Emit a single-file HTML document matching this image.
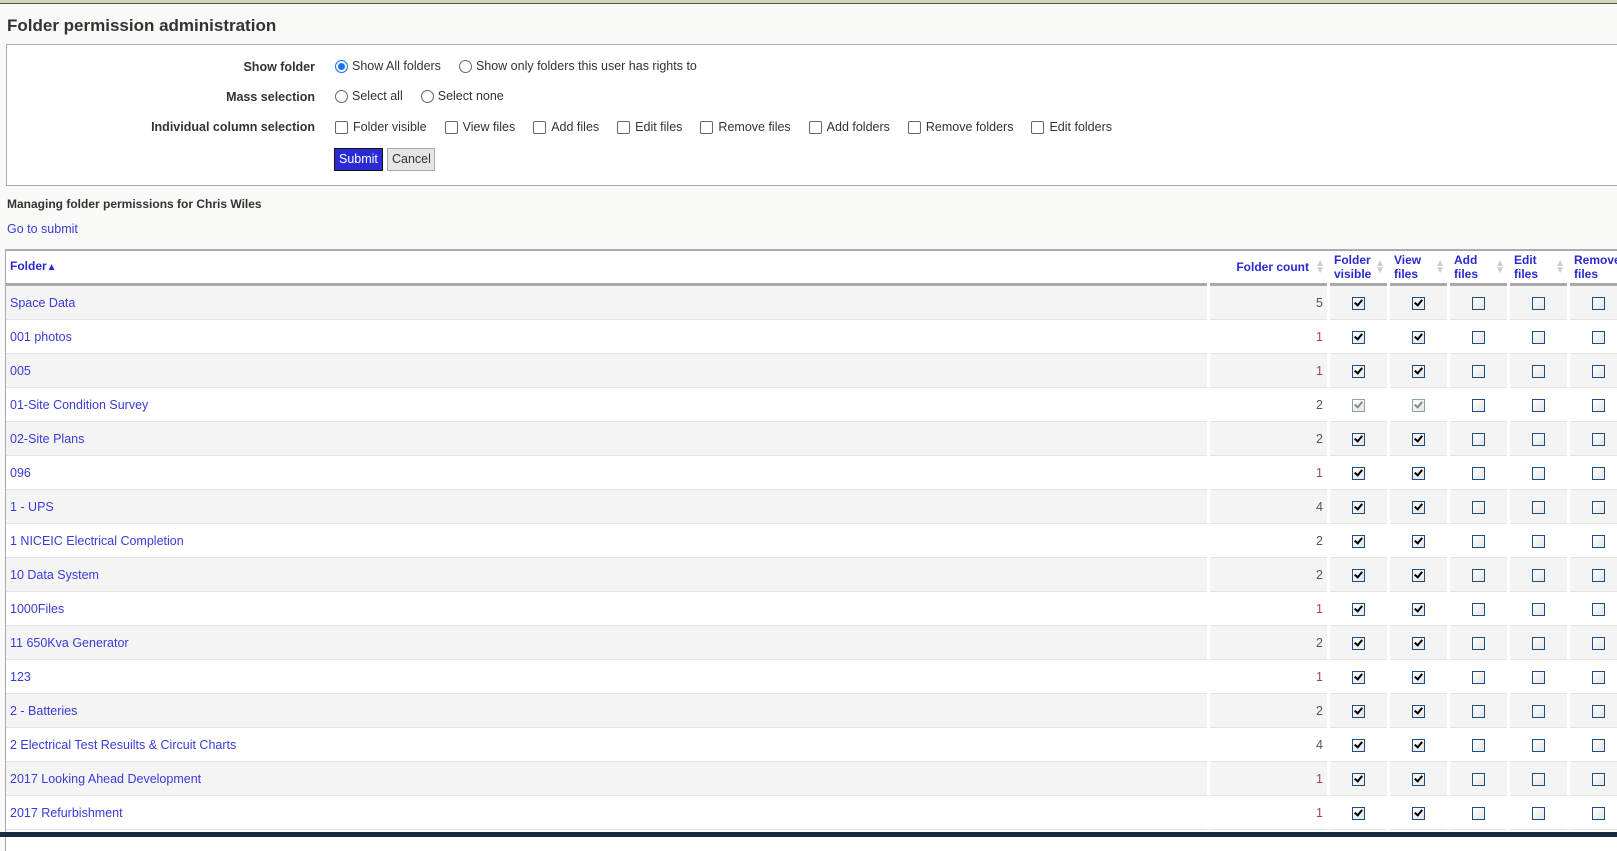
<!DOCTYPE html>
<html><head><meta charset="utf-8"><style>
body{margin:0;width:1617px;height:837px;overflow:hidden;background:#f9f9f7;font-family:"Liberation Sans",sans-serif;color:#333;position:relative}
.top{position:absolute;left:0;top:0;width:1617px;height:3px;background:#d3d5bd;border-bottom:1px solid #555}
h1{position:absolute;left:7px;top:16px;margin:0;font-size:17px;font-weight:bold;color:#333}
.form{position:absolute;left:6px;top:44px;width:1640px;height:140px;background:#fff;border:1px solid #aaa}
.lab{position:absolute;left:0;width:308px;text-align:right;font-weight:bold;font-size:12.5px;color:#333;white-space:nowrap}
.opt{position:absolute;left:328px;font-size:12.5px;white-space:nowrap;color:#333}
.opt span{display:inline-flex;align-items:center;margin-right:18px}
.rad{display:inline-block;width:13px;height:13px;border:1px solid #666;border-radius:50%;margin-right:4px;box-sizing:border-box;background:#fff}
.rad.on{border:1px solid #1a73e8;box-shadow:inset 0 0 0 2px #fff;background:#1a73e8}
.cb{display:inline-block;width:13px;height:13px;border:1px solid #666;border-radius:2px;margin-right:5px;box-sizing:border-box}
.btn{position:absolute;top:103px;height:23px;font-size:12.5px;line-height:21px;box-sizing:border-box;padding:0 4px}
.sub{left:327px;width:49px;background:#2b2bd6;color:#fff;border:1px solid #111}
.can{left:380px;width:48px;background:#e5e5e5;color:#333;border:1px solid #aaa}
.m{position:absolute;left:7px;top:197px;font-size:12px;font-weight:bold}
.g{position:absolute;left:7px;top:222px;font-size:12.5px;color:#3a3ad8}
.tb{position:absolute;left:5px;top:249px;width:1640px;height:600px;background:#fff;border-top:2px solid #aaa;border-left:1px solid #aaa}
table{position:absolute;left:-3px;top:0;border-collapse:separate;border-spacing:3px 0;table-layout:fixed;font-size:12.5px;width:1624px}
th{height:32px;border-bottom:3px solid #aaa;color:#2a2ad0;font-weight:bold;text-align:left;vertical-align:middle;padding:0 4px;line-height:14px;position:relative;font-size:12px}
td{height:33px;border-bottom:1px solid #e3e3e3;padding:0 4px;vertical-align:middle;white-space:nowrap}
tbody tr:nth-child(odd) td{background:#f4f4f4}
td.f{color:#3a3ad8}
td.c{text-align:right;color:#555}
td.p{color:#a2406e}
td.k{text-align:center}
.x{display:inline-block;width:13px;height:13px;border:1.5px solid #1e4e80;box-sizing:border-box;background:linear-gradient(135deg,#fff,#e4e4e4);position:relative;vertical-align:middle}
.x.on::after{content:"";position:absolute;left:2.5px;top:0px;width:3px;height:6px;border-right:2.5px solid #000;border-bottom:2.5px solid #000;transform:rotate(40deg)}
.x.dis{border-color:#8aa0b8}.x.dis::after{border-color:#888}
.s{position:absolute;right:2px;top:9px;color:#ccc;font-size:10px;line-height:7px}
</style></head><body>
<div class="top"></div>
<h1>Folder permission administration</h1>
<div class="form">
<div class="lab" style="top:15px">Show folder</div>
<div class="opt" style="top:14px"><span><i class="rad on"></i>Show All folders</span><span><i class="rad"></i>Show only folders this user has rights to</span></div>
<div class="lab" style="top:45px">Mass selection</div>
<div class="opt" style="top:44px"><span><i class="rad"></i>Select all</span><span><i class="rad"></i>Select none</span></div>
<div class="lab" style="top:75px">Individual column selection</div>
<div class="opt" style="top:75px"><span><i class="cb"></i>Folder visible</span><span><i class="cb"></i>View files</span><span><i class="cb"></i>Add files</span><span><i class="cb"></i>Edit files</span><span><i class="cb"></i>Remove files</span><span><i class="cb"></i>Add folders</span><span><i class="cb"></i>Remove folders</span><span><i class="cb"></i>Edit folders</span></div>
<div class="btn sub">Submit</div><div class="btn can">Cancel</div>
</div>
<div class="m">Managing folder permissions for Chris Wiles</div>
<div class="g">Go to submit</div>
<div class="tb">
<table>
<colgroup><col style="width:1201px"><col style="width:117px"><col style="width:57px"><col style="width:57px"><col style="width:57px"><col style="width:57px"><col style="width:57px"></colgroup>
<thead><tr><th>Folder<span style="font-size:10px">▲</span></th><th style="text-align:right;padding-right:18px">Folder count<span class="s">▲<br>▼</span></th><th>Folder<br>visible<span class="s">▲<br>▼</span></th><th>View<br>files<span class="s">▲<br>▼</span></th><th>Add<br>files<span class="s">▲<br>▼</span></th><th>Edit<br>files<span class="s">▲<br>▼</span></th><th>Remove<br>files</th></tr></thead>
<tbody>
<tr><td class="f">Space Data</td><td class="c">5</td><td class="k"><i class="x on"></i></td><td class="k"><i class="x on"></i></td><td class="k"><i class="x"></i></td><td class="k"><i class="x"></i></td><td class="k"><i class="x"></i></td></tr>
<tr><td class="f">001 photos</td><td class="c p">1</td><td class="k"><i class="x on"></i></td><td class="k"><i class="x on"></i></td><td class="k"><i class="x"></i></td><td class="k"><i class="x"></i></td><td class="k"><i class="x"></i></td></tr>
<tr><td class="f">005</td><td class="c p">1</td><td class="k"><i class="x on"></i></td><td class="k"><i class="x on"></i></td><td class="k"><i class="x"></i></td><td class="k"><i class="x"></i></td><td class="k"><i class="x"></i></td></tr>
<tr><td class="f">01-Site Condition Survey</td><td class="c">2</td><td class="k"><i class="x on dis"></i></td><td class="k"><i class="x on dis"></i></td><td class="k"><i class="x"></i></td><td class="k"><i class="x"></i></td><td class="k"><i class="x"></i></td></tr>
<tr><td class="f">02-Site Plans</td><td class="c">2</td><td class="k"><i class="x on"></i></td><td class="k"><i class="x on"></i></td><td class="k"><i class="x"></i></td><td class="k"><i class="x"></i></td><td class="k"><i class="x"></i></td></tr>
<tr><td class="f">096</td><td class="c p">1</td><td class="k"><i class="x on"></i></td><td class="k"><i class="x on"></i></td><td class="k"><i class="x"></i></td><td class="k"><i class="x"></i></td><td class="k"><i class="x"></i></td></tr>
<tr><td class="f">1 - UPS</td><td class="c">4</td><td class="k"><i class="x on"></i></td><td class="k"><i class="x on"></i></td><td class="k"><i class="x"></i></td><td class="k"><i class="x"></i></td><td class="k"><i class="x"></i></td></tr>
<tr><td class="f">1 NICEIC Electrical Completion</td><td class="c">2</td><td class="k"><i class="x on"></i></td><td class="k"><i class="x on"></i></td><td class="k"><i class="x"></i></td><td class="k"><i class="x"></i></td><td class="k"><i class="x"></i></td></tr>
<tr><td class="f">10 Data System</td><td class="c">2</td><td class="k"><i class="x on"></i></td><td class="k"><i class="x on"></i></td><td class="k"><i class="x"></i></td><td class="k"><i class="x"></i></td><td class="k"><i class="x"></i></td></tr>
<tr><td class="f">1000Files</td><td class="c p">1</td><td class="k"><i class="x on"></i></td><td class="k"><i class="x on"></i></td><td class="k"><i class="x"></i></td><td class="k"><i class="x"></i></td><td class="k"><i class="x"></i></td></tr>
<tr><td class="f">11 650Kva Generator</td><td class="c">2</td><td class="k"><i class="x on"></i></td><td class="k"><i class="x on"></i></td><td class="k"><i class="x"></i></td><td class="k"><i class="x"></i></td><td class="k"><i class="x"></i></td></tr>
<tr><td class="f">123</td><td class="c p">1</td><td class="k"><i class="x on"></i></td><td class="k"><i class="x on"></i></td><td class="k"><i class="x"></i></td><td class="k"><i class="x"></i></td><td class="k"><i class="x"></i></td></tr>
<tr><td class="f">2 - Batteries</td><td class="c">2</td><td class="k"><i class="x on"></i></td><td class="k"><i class="x on"></i></td><td class="k"><i class="x"></i></td><td class="k"><i class="x"></i></td><td class="k"><i class="x"></i></td></tr>
<tr><td class="f">2 Electrical Test Resuilts &amp; Circuit Charts</td><td class="c">4</td><td class="k"><i class="x on"></i></td><td class="k"><i class="x on"></i></td><td class="k"><i class="x"></i></td><td class="k"><i class="x"></i></td><td class="k"><i class="x"></i></td></tr>
<tr><td class="f">2017 Looking Ahead Development</td><td class="c p">1</td><td class="k"><i class="x on"></i></td><td class="k"><i class="x on"></i></td><td class="k"><i class="x"></i></td><td class="k"><i class="x"></i></td><td class="k"><i class="x"></i></td></tr>
<tr><td class="f">2017 Refurbishment</td><td class="c p">1</td><td class="k"><i class="x on"></i></td><td class="k"><i class="x on"></i></td><td class="k"><i class="x"></i></td><td class="k"><i class="x"></i></td><td class="k"><i class="x"></i></td></tr>
</tbody>
</table>
</div>
<div style="position:absolute;left:0;top:832px;width:1617px;height:5px;background:#1c2a40"></div>
</body></html>
